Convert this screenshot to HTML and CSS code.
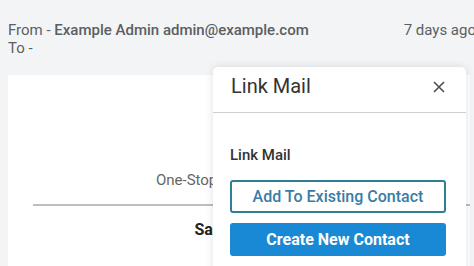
FILE: index.html
```html
<!DOCTYPE html>
<html>
<head>
<meta charset="utf-8">
<link rel="stylesheet" href="styles.css">
</head>
<body>
<div class="page">
  <header class="mail-head">
    <div class="meta">
      <div class="line">From - <span class="strong">Example Admin admin@example.com</span></div>
      <div class="line">To -</div>
    </div>
    <div class="time">7 days ago</div>
  </header>
  <main class="card">
    <div class="title">Thanks</div>
    <div class="tagline">One-Stop Solution For All</div>
    <hr class="rule">
    <div class="bold">Sample Mail</div>
  </main>
  <section class="panel">
    <div class="panel-head">
      <span class="panel-title">Link Mail</span>
      <svg class="close" width="12" height="12" viewBox="0 0 12 12"><path d="M1 1L11 11M11 1L1 11" stroke="#4a4f53" stroke-width="1.6" fill="none"/></svg>
    </div>
    <div class="panel-body">
      <div class="label">Link Mail</div>
      <button class="btn btn-outline">Add To Existing Contact</button>
      <button class="btn btn-fill">Create New Contact</button>
    </div>
  </section>
</div>
</body>
</html>
```
FILE: styles.css
```css
html, body {
  margin: 0;
  padding: 0;
  height: 100%;
  overflow: hidden;
  background: #f3f4f6;
  font-family: Roboto, "Liberation Sans", sans-serif;
}
.page {
  position: relative;
  height: 266px;
  overflow: hidden;
}
.mail-head {
  display: flex;
  justify-content: space-between;
  width: 484px;
  padding: 21px 8px 0 8px;
  box-sizing: border-box;
  height: 75px;
  color: #5b5f63;
  font-size: 15px;
}
.line {
  line-height: 18px;
}
.strong {
  font-weight: 500;
}
.time {
  line-height: 18px;
  white-space: nowrap;
}
.card {
  margin: 0 4px 0 8px;
  background: #fff;
  height: 200px;
  text-align: center;
  padding-top: 45px;
  box-sizing: border-box;
}
.title {
  font-size: 15px;
  color: #333;
  line-height: 20px;
}
.tagline {
  margin-top: 30px;
  font-size: 15px;
  color: #666;
  line-height: 20px;
}
.rule {
  margin: 14px 0 0 25px;
  border: 0;
  border-top: 2px solid #bdbdbd;
}
.bold {
  margin-top: 14px;
  font-weight: 700;
  font-size: 16px;
  color: #222;
  line-height: 20px;
}
.panel {
  position: absolute;
  left: 213px;
  top: 67px;
  width: 253px;
  height: 220px;
  background: #fff;
  border-radius: 5px;
  box-shadow: 0 0 8px rgba(0,0,0,0.12);
}
.panel-head {
  display: flex;
  justify-content: space-between;
  align-items: center;
  height: 46px;
  padding: 0 21px 8px 18px;
  box-sizing: border-box;
  border-bottom: 1px solid #cfcfcf;
}
.panel-title {
  font-size: 20px;
  color: #333;
}
.close {
  display: block;
  margin-top: 2px;
}
.panel-body {
  display: flex;
  flex-direction: column;
  padding: 33px 20px 0 17px;
}
.label {
  font-size: 15px;
  font-weight: 500;
  color: #333;
  line-height: 18px;
  margin-bottom: 16px;
}
.btn {
  height: 33px;
  border-radius: 3px;
  font-family: Roboto, "Liberation Sans", sans-serif;
  font-size: 16px;
  font-weight: 500;
  padding: 0;
}
.btn-outline {
  background: #fff;
  border: 2px solid #2f7f94;
  color: #3a7ca5;
}
.btn-fill {
  margin-top: 10px;
  background: #1989d6;
  border: 0;
  color: #fff;
  font-weight: 700;
}
```
